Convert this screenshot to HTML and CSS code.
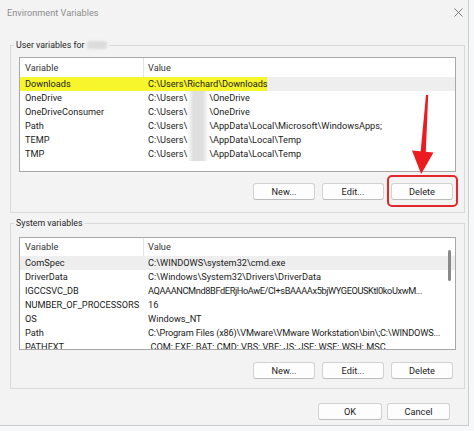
FILE: index.html
```html
<!DOCTYPE html>
<html>
<head>
<meta charset="utf-8">
<title>Environment Variables</title>
<link rel="stylesheet" href="styles.css">
</head>
<body>
<div class="window">
  <div class="titlebar">
    <span class="title">Environment Variables</span>
    <svg class="close" width="9" height="9" viewBox="0 0 9 9"><path d="M0.5 0.5 L8.5 8.5 M8.5 0.5 L0.5 8.5" stroke="#6b6b6b" stroke-width="0.9" fill="none"/></svg>
  </div>

  <fieldset class="group group-user">
    <legend>User variables for <span class="blur-name"></span></legend>
    <div class="list list-user">
      <div class="row head"><span class="cv">Variable</span><span class="cl">Value</span></div>
      <div class="row selected mark"><span class="cv">Downloads</span><span class="cl">C:\Users\Richard\Downloads</span></div>
      <div class="row"><span class="cv">OneDrive</span><span class="cl">C:\Users\<span class="blur"></span>\OneDrive</span></div>
      <div class="row"><span class="cv">OneDriveConsumer</span><span class="cl">C:\Users\<span class="blur"></span>\OneDrive</span></div>
      <div class="row"><span class="cv">Path</span><span class="cl">C:\Users\<span class="blur"></span>\AppData\Local\Microsoft\WindowsApps;</span></div>
      <div class="row"><span class="cv">TEMP</span><span class="cl">C:\Users\<span class="blur"></span>\AppData\Local\Temp</span></div>
      <div class="row"><span class="cv">TMP</span><span class="cl">C:\Users\<span class="blur"></span>\AppData\Local\Temp</span></div>
    </div>
    <div class="btns">
      <button class="btn">New...</button>
      <button class="btn">Edit...</button>
      <button class="btn annot">Delete</button>
    </div>
  </fieldset>

  <fieldset class="group group-sys">
    <legend>System variables</legend>
    <div class="list list-sys">
      <div class="row head"><span class="cv">Variable</span><span class="cl">Value</span></div>
      <div class="row selected"><span class="cv">ComSpec</span><span class="cl">C:\WINDOWS\system32\cmd.exe</span></div>
      <div class="row"><span class="cv">DriverData</span><span class="cl">C:\Windows\System32\Drivers\DriverData</span></div>
      <div class="row"><span class="cv">IGCCSVC_DB</span><span class="cl tighter">AQAAANCMnd8BFdERjHoAwE/Cl+sBAAAAx5bjWYGEOUSKtl0koUxwM...</span></div>
      <div class="row"><span class="cv">NUMBER_OF_PROCESSORS</span><span class="cl">16</span></div>
      <div class="row"><span class="cv">OS</span><span class="cl">Windows_NT</span></div>
      <div class="row"><span class="cv">Path</span><span class="cl tight">C:\Program Files (x86)\VMware\VMware Workstation\bin\;C:\WINDOWS...</span></div>
      <div class="row"><span class="cv">PATHEXT</span><span class="cl">.COM;.EXE;.BAT;.CMD;.VBS;.VBE;.JS;.JSE;.WSF;.WSH;.MSC</span></div>
      <div class="scrollbar"></div>
    </div>
    <div class="btns btns-sys">
      <button class="btn">New...</button>
      <button class="btn">Edit...</button>
      <button class="btn">Delete</button>
    </div>
  </fieldset>

  <div class="footer">
    <button class="btn btn-ok">OK</button>
    <button class="btn btn-cancel">Cancel</button>
  </div>

  <svg class="arrow" width="36" height="90" viewBox="0 0 36 90">
    <polygon points="21,5 23.2,5 20.8,62 15.6,62" fill="#ec1b1f"/>
    <polygon points="7,60.5 28.5,62.5 16.2,84" fill="#ec1b1f"/>
  </svg>
</div>
</body>
</html>
```

FILE: styles.css
```css
* { box-sizing: border-box; }

body {
  margin: 0;
  background: #f7f8fa;
  font-family: Roboto, "Noto Sans", sans-serif;
  font-size: 9.2px;
  color: #1b1b1b;
}

.window {
  position: relative;
  width: 469px;
  height: 426px;
  background: #f3f3f3;
  border-right: 1px solid #cdcdcd;
  border-bottom: 1px solid #cdcdcd;
}

.titlebar {
  height: 24px;
  display: flex;
  align-items: center;
  justify-content: space-between;
  padding: 0 5px 0 7px;
}

.title {
  color: #8e8e8e;
  font-size: 9.2px;
}

.group {
  margin: 15px 0 0 10px;
  width: 455px;
  min-width: 0;
  border: 1px solid #dadada;
  padding: 6px 8px 12px;
}

.group-sys {
  margin-top: 4px;
  padding: 8px 8px 9px;
}

.group legend {
  padding: 0 2px;
  margin-left: -5px;
  line-height: 12px;
  font-size: 8.8px;
  color: #1f1f1f;
}

.blur-name {
  display: inline-block;
  width: 20px;
  height: 8px;
  vertical-align: -1px;
  background: #dcdcdc;
  border-radius: 3px;
  filter: blur(1px);
}

.list {
  position: relative;
  height: 115px;
  background: #fff;
  border: 1px solid #a8a8a8;
  overflow: hidden;
}

.list-sys { height: 113px; }

.row {
  display: grid;
  grid-template-columns: 123px 1fr;
  height: 14px;
  line-height: 14px;
  white-space: nowrap;
}

.row > span { overflow: hidden; }

.cv { padding-left: 5px; }
.cl { padding-left: 5px; }

.tight { letter-spacing: -0.16px; }
.tighter { letter-spacing: -0.38px; }

.head {
  height: 19px;
  line-height: 19px;
  color: #333;
}

.list-sys .head {
  height: 18px;
  line-height: 18px;
}

.head .cl {
  border-left: 1px solid #e4e4e4;
  padding-left: 4px;
}

.selected { background: #eeeeee; }

.mark {
  background: linear-gradient(to right, #f7f52c 0 247px, #eeeeee 247px);
}

.blur {
  display: inline-block;
  width: 22px;
  height: 14px;
  vertical-align: top;
  background: linear-gradient(to right, rgba(220,220,220,0), #dedede 30%, #dedede 70%, rgba(220,220,220,0));
}

.scrollbar {
  position: absolute;
  left: 428px;
  top: 12px;
  width: 2.5px;
  height: 31px;
  border-radius: 2px;
  background: #8a8a8a;
}

.btns {
  display: flex;
  justify-content: flex-end;
  gap: 7px;
  margin-top: 11px;
  padding-right: 3px;
}

.btns-sys { margin-top: 12px; }

.btn {
  width: 62px;
  height: 17px;
  padding: 0;
  border: 1px solid #d2d2d2;
  border-bottom-color: #bcbcbc;
  border-radius: 3px;
  background: #fdfdfd;
  font-family: inherit;
  font-size: 9.2px;
  color: #1b1b1b;
  display: flex;
  align-items: center;
  justify-content: center;
}

.annot { position: relative; }

.annot::after {
  content: "";
  position: absolute;
  top: -9px;
  right: -6px;
  bottom: -8px;
  left: -5px;
  border: 2px solid #e3262a;
  border-radius: 5px;
}

.footer {
  display: flex;
  justify-content: flex-end;
  gap: 5px;
  margin-top: 14px;
  padding-right: 18px;
}

.btn-ok { width: 64px; }
.btn-cancel { width: 63px; }

.arrow {
  position: absolute;
  left: 405px;
  top: 90px;
}
```
